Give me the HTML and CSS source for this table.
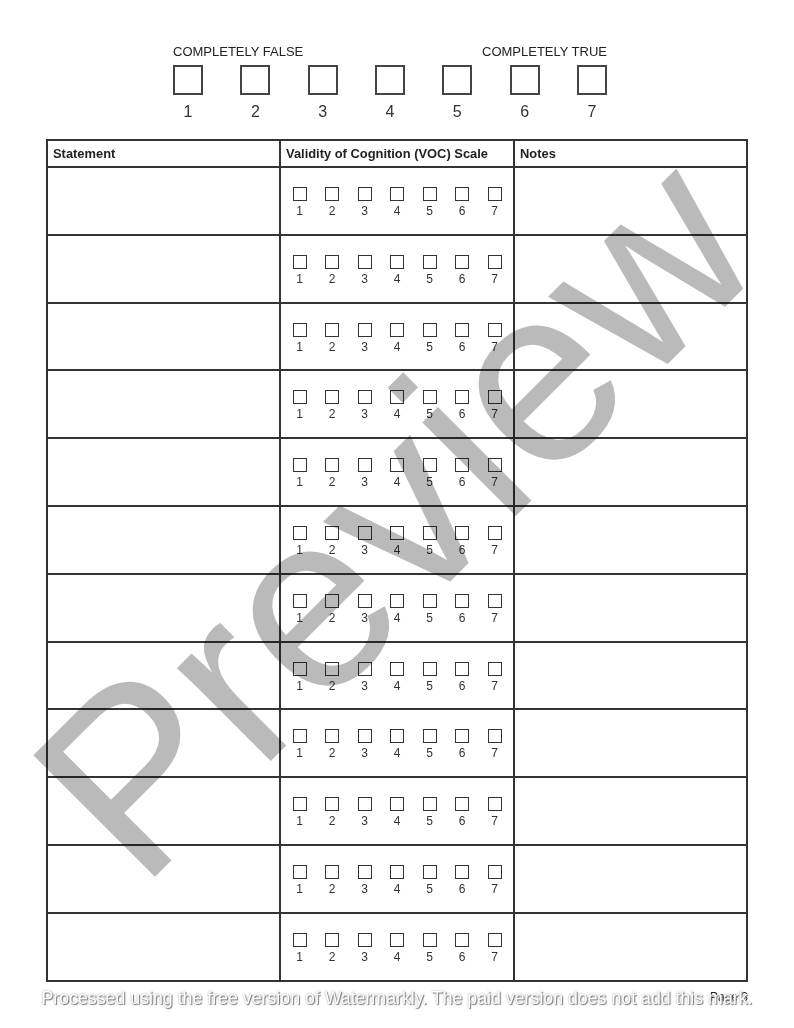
FILE: index.html
```html
<!DOCTYPE html>
<html lang="en">
<head>
<meta charset="utf-8">
<title>VOC Scale - Page 3</title>
<link rel="stylesheet" href="styles.css">
</head>
<body>
<div class="page">
  <div class="scale">
    <div class="scale-labels"><span>COMPLETELY FALSE</span><span>COMPLETELY TRUE</span></div>
    <div class="scale-boxes">
      <div class="opt"><span class="box"></span><span class="num">1</span></div>
      <div class="opt"><span class="box"></span><span class="num">2</span></div>
      <div class="opt"><span class="box"></span><span class="num">3</span></div>
      <div class="opt"><span class="box"></span><span class="num">4</span></div>
      <div class="opt"><span class="box"></span><span class="num">5</span></div>
      <div class="opt"><span class="box"></span><span class="num">6</span></div>
      <div class="opt"><span class="box"></span><span class="num">7</span></div>
    </div>
  </div>

  <div class="grid" id="grid">
    <div class="cell head">Statement</div>
    <div class="cell head">Validity of Cognition (VOC) Scale</div>
    <div class="cell head">Notes</div>
  </div>

  <div class="footer">Page 3</div>
  <div class="wm-text">Processed using the free version of Watermarkly. The paid version does not add this mark.</div>
  <div class="wm-big">Preview</div>
</div>
<script>
(function () {
  var grid = document.getElementById('grid');
  for (var r = 0; r < 12; r++) {
    var c1 = document.createElement('div');
    c1.className = 'cell';
    var c2 = document.createElement('div');
    c2.className = 'cell voc';
    var row = document.createElement('div');
    row.className = 'mini-scale';
    for (var i = 1; i <= 7; i++) {
      var o = document.createElement('div');
      o.className = 'mini-opt';
      o.innerHTML = '<span class="mini-box"></span><span class="mini-num">' + i + '</span>';
      row.appendChild(o);
    }
    c2.appendChild(row);
    var c3 = document.createElement('div');
    c3.className = 'cell';
    grid.appendChild(c1);
    grid.appendChild(c2);
    grid.appendChild(c3);
  }
})();
</script>
</body>
</html>
```

FILE: styles.css
```css
html, body {
  margin: 0;
  padding: 0;
  background: #ffffff;
}

body {
  font-family: "Liberation Sans", Arial, sans-serif;
  color: #222;
}

.page {
  position: relative;
  width: 794px;
  height: 1028px;
  overflow: hidden;
}

/* Top scale */
.scale {
  margin-left: 173px;
  width: 434px;
  padding-top: 44px;
}

.scale-labels {
  display: flex;
  justify-content: space-between;
  font-size: 13px;
  line-height: 15px;
  color: #222;
}

.scale-boxes {
  display: flex;
  justify-content: space-between;
  margin-top: 6px;
}

.opt {
  width: 30px;
  display: flex;
  flex-direction: column;
  align-items: center;
}

.box {
  display: block;
  width: 30px;
  height: 30px;
  box-sizing: border-box;
  border: 2px solid #444;
}

.num {
  margin-top: 8px;
  font-size: 16px;
  line-height: 18px;
  color: #333;
}

/* Table */
.grid {
  margin-top: 18px;
  margin-left: 46px;
  width: 702px;
  box-sizing: border-box;
  display: grid;
  grid-template-columns: 233px 234px 233px;
  grid-template-rows: 27px repeat(12, 67.8px);
  border-left: 2px solid #333;
  border-top: 2px solid #333;
}

.cell {
  border-right: 2px solid #333;
  border-bottom: 2px solid #333;
  box-sizing: border-box;
}

.head {
  display: flex;
  align-items: center;
  padding-left: 5px;
  font-weight: bold;
  font-size: 12.9px;
  color: #222;
}

.voc {
  padding-top: 19px;
}

.mini-scale {
  display: grid;
  grid-template-columns: repeat(7, 32.5px);
  justify-content: center;
}

.mini-opt {
  display: flex;
  flex-direction: column;
  align-items: center;
}

.mini-box {
  display: block;
  width: 14px;
  height: 14px;
  box-sizing: border-box;
  border: 1.5px solid #333;
}

.mini-num {
  margin-top: 3px;
  font-size: 12px;
  line-height: 14px;
  color: #333;
}

/* Footer */
.footer {
  position: absolute;
  right: 46px;
  top: 990px;
  font-size: 12px;
  line-height: 14px;
  color: #222;
}

/* Watermarks (overlays) */
.wm-big {
  position: absolute;
  left: 141px;
  top: 680px;
  font-family: "Liberation Sans", Arial, sans-serif;
  font-size: 250px;
  line-height: 250px;
  white-space: nowrap;
  color: #bababa;
  transform-origin: 0 211.6px;
  transform: rotate(-45deg);
  mix-blend-mode: multiply;
  pointer-events: none;
}

.wm-text {
  position: absolute;
  left: 0;
  right: 0;
  top: 987px;
  text-align: center;
  font-family: "Liberation Sans", Arial, sans-serif;
  font-size: 17.75px;
  line-height: 22px;
  color: #ffffff;
  white-space: nowrap;
  text-shadow: 1px 1px 1px #777, 0 0 2px #999;
  z-index: 2;
}
```
